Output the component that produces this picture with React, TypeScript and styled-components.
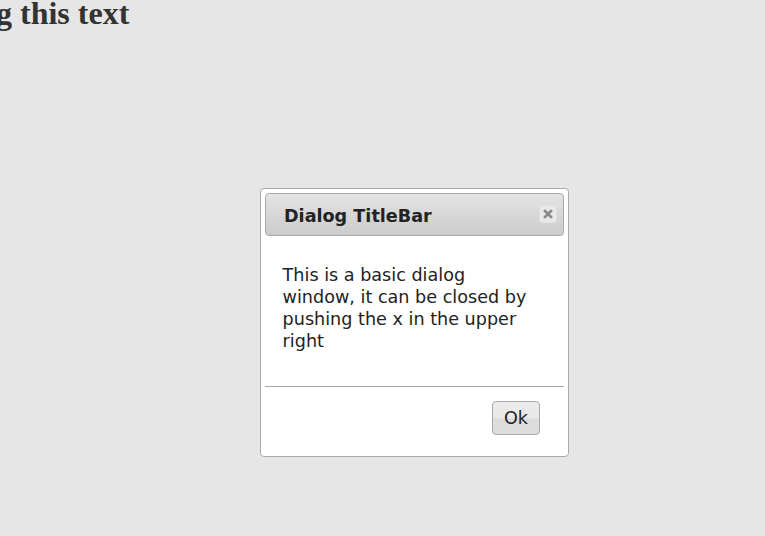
import React from "react";
import styled, { createGlobalStyle } from "styled-components";

const Global = createGlobalStyle`
  html, body {
    margin: 0;
    padding: 0;
    background: #e6e6e6;
    overflow: hidden;
  }
  body {
    width: 765px;
    height: 536px;
    position: relative;
  }
`;

const Heading = styled.h1`
  margin: -5px 0 0 -4px;
  font-family: "Liberation Serif", "Times New Roman", serif;
  font-weight: bold;
  font-size: 32px;
  color: #333333;
  white-space: nowrap;
`;

const Dialog = styled.div`
  position: absolute;
  left: 260px;
  top: 188px;
  width: 299px;
  padding: 4px;
  background: #ffffff;
  border: 1px solid #aaaaaa;
  border-radius: 4px;
  font-family: "DejaVu Sans", Verdana, sans-serif;
  font-size: 17.6px;
  color: #222222;
`;

const TitleBar = styled.div`
  display: flex;
  align-items: center;
  justify-content: space-between;
  box-sizing: border-box;
  height: 43px;
  padding: 3px 6px 0 18px;
  border: 1px solid #aaaaaa;
  border-radius: 4px;
  background: linear-gradient(to bottom, #e4e4e4 0%, #d6d6d6 55%, #cccccc 100%);
`;

const Title = styled.span`
  font-weight: bold;
  color: #222222;
`;

const CloseButton = styled.button`
  box-sizing: border-box;
  width: 18px;
  height: 18px;
  padding: 0;
  margin-top: -4px;
  display: flex;
  align-items: center;
  justify-content: center;
  border: 1px solid #e0e0e0;
  border-radius: 3px;
  background: #e8e8e8;
  cursor: pointer;
`;

const Content = styled.div`
  padding: 28px 27px 34px 17.6px;
  line-height: 22px;
`;

const Footer = styled.div`
  display: flex;
  justify-content: flex-end;
  border-top: 1px solid #aaaaaa;
  padding: 14px 24px 17px 0;
`;

const Button = styled.button`
  height: 34px;
  padding: 0 11px;
  font-family: "DejaVu Sans", Verdana, sans-serif;
  font-size: 17.6px;
  color: #222222;
  border: 1px solid #aaaaaa;
  border-radius: 4px;
  background: linear-gradient(to bottom, #ececec 0%, #e8e8e8 50%, #dcdcdc 54%, #dedede 100%);
  cursor: pointer;
`;

export default function App() {
  return (
    <>
      <Global />
      <Heading>g this text</Heading>
      <Dialog>
        <TitleBar>
          <Title>Dialog TitleBar</Title>
          <CloseButton aria-label="close">
            <svg width="10" height="10" viewBox="0 0 10 10">
              <path d="M2 2 L8 8 M8 2 L2 8" stroke="#888888" strokeWidth="2.6" strokeLinecap="square" />
            </svg>
          </CloseButton>
        </TitleBar>
        <Content>
          This is a basic dialog window, it can be closed by pushing the x in the upper right
        </Content>
        <Footer>
          <Button>Ok</Button>
        </Footer>
      </Dialog>
    </>
  );
}
